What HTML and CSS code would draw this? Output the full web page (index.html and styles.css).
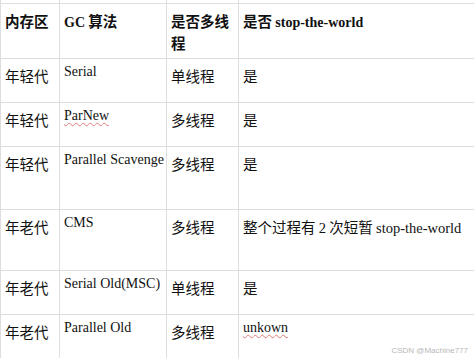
FILE: index.html
```html
<!DOCTYPE html>
<html lang="zh">
<head>
<meta charset="utf-8">
<link rel="stylesheet" href="styles.css">
</head>
<body>
<table class="gc">
  <colgroup>
    <col class="c1"><col class="c2"><col class="c3"><col class="c4">
  </colgroup>
  <tr class="cut"><td></td><td></td><td></td><td></td></tr>
  <tr class="head r0">
    <th>内存区</th>
    <th><span class="en-b">GC</span> 算法</th>
    <th>是否多线程</th>
    <th>是否 <span class="en-b">stop-the-world</span></th>
  </tr>
  <tr class="r44">
    <td>年轻代</td><td class="en">Serial</td><td>单线程</td><td>是</td>
  </tr>
  <tr class="r44">
    <td>年轻代</td><td class="en"><span class="spell">ParNew</span></td><td>多线程</td><td>是</td>
  </tr>
  <tr class="r63">
    <td>年轻代</td><td class="en nowrap">Parallel Scavenge</td><td>多线程</td><td>是</td>
  </tr>
  <tr class="r61">
    <td>年老代</td><td class="en">CMS</td><td>多线程</td><td>整个过程有 <span class="lat">2</span> 次短暂 <span class="lat">stop-the-world</span></td>
  </tr>
  <tr class="r44">
    <td>年老代</td><td class="en nowrap">Serial Old(MSC)</td><td>单线程</td><td>是</td>
  </tr>
  <tr class="r44">
    <td>年老代</td><td class="en">Parallel Old</td><td>多线程</td><td class="en"><span class="spell">unkown</span></td>
  </tr>
</table>
<div class="mark">CSDN @Machine777</div>
</body>
</html>
```

FILE: styles.css
```css
html, body {
  margin: 0;
  padding: 0;
  background: #fff;
  overflow: hidden;
  width: 474px;
  height: 358px;
}
body {
  position: relative;
  font-family: "Noto Sans CJK SC", "Liberation Sans", sans-serif;
  color: #111;
}
.gc {
  border-collapse: collapse;
  table-layout: fixed;
  width: 476px;
  font-size: 14.5px;
}
.c1 { width: 59px; }
.c2 { width: 107px; }
.c3 { width: 72px; }
.c4 { width: 238px; }
.gc td, .gc th {
  border: 1px solid #dedede;
  vertical-align: top;
  text-align: left;
  padding: 5px 4px 0 4px;
  line-height: 23px;
  font-weight: normal;
}
.gc .cut td {
  height: 3px;
  padding: 0;
  border-top: none;
  line-height: 0;
}
.gc th {
  font-weight: bold;
  line-height: 22px;
  padding-top: 6px;
}
.r0 { height: 55px; }
.r44 { height: 44px; }
.r63 { height: 63px; }
.r61 { height: 61px; }
.gc td.en {
  font-family: "Liberation Serif", "Noto Sans CJK SC", serif;
  font-size: 14px;
  padding-top: 1px;
}
.gc td.nowrap {
  white-space: nowrap;
  overflow: visible;
  padding-right: 0;
}
.en-b {
  font-family: "Liberation Serif", serif;
  font-size: 14px;
}
.lat {
  font-family: "Liberation Serif", serif;
  font-size: 14.5px;
}
.spell {
  text-decoration: underline wavy #e57a7a;
  text-decoration-thickness: 1px;
  text-underline-offset: 2px;
}
.mark {
  position: absolute;
  right: 6px;
  top: 346px;
  white-space: nowrap;
  font-family: "Liberation Sans", sans-serif;
  font-size: 8px;
  color: #b8b8b8;
  line-height: 10px;
}
```
